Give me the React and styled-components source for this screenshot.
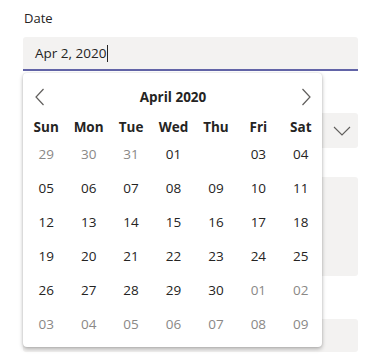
import React from "react";
import styled, { createGlobalStyle } from "styled-components";

const GlobalStyle = createGlobalStyle`
  body {
    margin: 0;
    background: #ffffff;
    font-family: "Open Sans", "Noto Sans", sans-serif;
    color: #252423;
  }
`;

const weekdays = ["Sun", "Mon", "Tue", "Wed", "Thu", "Fri", "Sat"];

const days = [
  ["29", "out"], ["30", "out"], ["31", "out"], ["01"], ["02", "sel"], ["03"], ["04"],
  ["05"], ["06"], ["07"], ["08"], ["09"], ["10"], ["11"],
  ["12"], ["13"], ["14"], ["15"], ["16"], ["17"], ["18"],
  ["19"], ["20"], ["21"], ["22"], ["23"], ["24"], ["25"],
  ["26"], ["27"], ["28"], ["29"], ["30"], ["01", "out"], ["02", "out"],
  ["03", "out"], ["04", "out"], ["05", "out"], ["06", "out"], ["07", "out"], ["08", "out"], ["09", "out"],
];

function App() {
  return (
    <Page>
      <GlobalStyle />
      <Label>Date</Label>
      <Input>
        Apr 2, 2020<Caret />
      </Input>
      <Dropdown>
        <svg width="18" height="10" viewBox="0 0 18 10">
          <path d="M1 1 L9 9 L17 1" fill="none" stroke="#605e5c" strokeWidth="1.1" />
        </svg>
      </Dropdown>
      <TextArea />
      <LastField />

      <Popup>
        <Header>
          <NavButton>
            <svg width="10" height="18" viewBox="0 0 10 18">
              <path d="M8.5 1 L1 9 L8.5 17" fill="none" stroke="#605e5c" strokeWidth="1.2" />
            </svg>
          </NavButton>
          <Month>April 2020</Month>
          <NavButton>
            <svg width="10" height="18" viewBox="0 0 10 18">
              <path d="M1.5 1 L9 9 L1.5 17" fill="none" stroke="#605e5c" strokeWidth="1.2" />
            </svg>
          </NavButton>
        </Header>
        <Grid>
          {weekdays.map((d) => (
            <Weekday key={d}>{d}</Weekday>
          ))}
          {days.map(([n, kind], i) => (
            <Day key={i} $kind={kind}>
              {n}
            </Day>
          ))}
        </Grid>
      </Popup>
    </Page>
  );
}

const Page = styled.div`
  position: relative;
  width: 372px;
  height: 363px;
  padding: 9px 14px 0 23px;
  box-sizing: border-box;
  display: flex;
  flex-direction: column;
`;

const Label = styled.div`
  font-size: 13px;
  line-height: 18px;
  padding-left: 1px;
  margin-bottom: 10px;
`;

const Field = styled.div`
  background: #f3f2f1;
  border-radius: 3px;
  box-sizing: border-box;
`;

const Input = styled(Field)`
  height: 34px;
  border-radius: 3px 3px 0 0;
  border-bottom: 2px solid #6264a7;
  padding: 0 12px;
  display: flex;
  align-items: center;
  font-size: 13.5px;
  color: #252423;
`;

const Caret = styled.span`
  display: inline-block;
  width: 1px;
  height: 17px;
  background: #252423;
  margin-left: 1px;
`;

const Dropdown = styled(Field)`
  margin-top: 42px;
  height: 35px;
  display: flex;
  align-items: center;
  justify-content: flex-end;
  padding-right: 7px;
`;

const TextArea = styled(Field)`
  margin-top: 29px;
  height: 99px;
`;

const LastField = styled(Field)`
  margin-top: 43px;
  height: 33px;
`;

const Popup = styled.div`
  position: absolute;
  top: 73px;
  left: 23px;
  width: 299px;
  height: 274px;
  box-sizing: border-box;
  background: #ffffff;
  border-radius: 4px;
  box-shadow: 0 2px 4px rgba(0, 0, 0, 0.28), 0 0 2px rgba(0, 0, 0, 0.12);
  padding: 12px 0 6px;
`;

const Header = styled.div`
  height: 24px;
  display: flex;
  align-items: center;
  justify-content: space-between;
  padding: 0 10px 0 11px;
  margin-bottom: 8px;
`;

const NavButton = styled.div`
  width: 12px;
  display: flex;
  align-items: center;
  justify-content: center;
`;

const Month = styled.div`
  font-size: 13.5px;
  font-weight: 700;
  color: #252423;
`;

const Grid = styled.div`
  display: grid;
  grid-template-columns: repeat(7, 1fr);
  grid-template-rows: 20px repeat(6, 34px);
  padding-left: 2px;
`;

const Weekday = styled.div`
  display: flex;
  align-items: center;
  justify-content: center;
  font-size: 13.5px;
  font-weight: 700;
  color: #252423;
`;

const Day = styled.div`
  display: flex;
  align-items: center;
  justify-content: center;
  font-size: 13.5px;
  color: ${(p) =>
    p.$kind === "out" ? "#8a8886" : p.$kind === "sel" ? "#ffffff" : "#252423"};
`;

export default App;
